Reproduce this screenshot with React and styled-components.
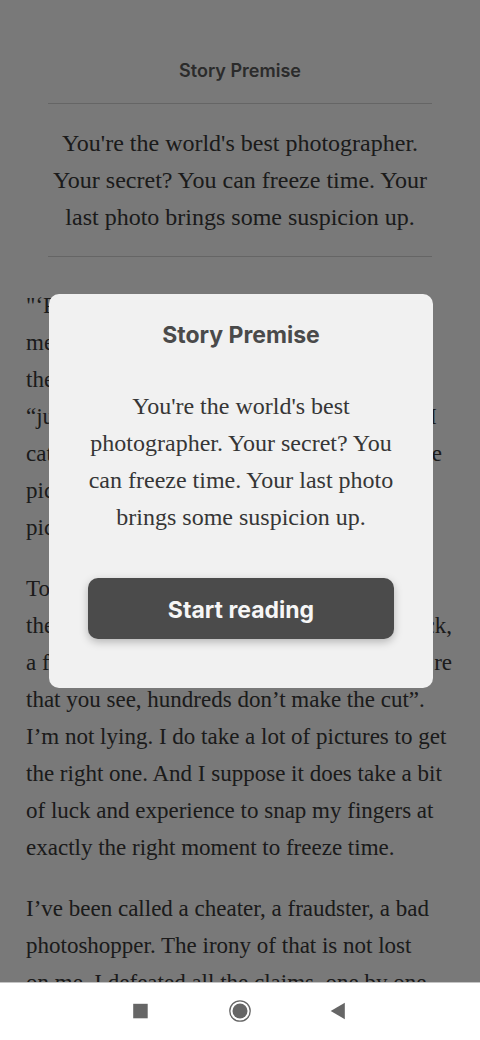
import React, { useState } from "react";
import styled, { createGlobalStyle } from "styled-components";

const GlobalStyle = createGlobalStyle`
  * {
    box-sizing: border-box;
  }

  body {
    margin: 0;
    background: #fff;
  }

  h1, h2, p {
    margin: 0;
    font-weight: inherit;
  }
`

const serif = '"Liberation Serif", Georgia, serif'
const sans = 'Inter, "Liberation Sans", sans-serif'

const Screen = styled.div`
  display: flex;
  flex-direction: column;
  height: 100vh;
  overflow: hidden;
`

const Reader = styled.main`
  position: relative;
  flex: 1;
  min-height: 0;
  overflow: hidden;
  background: #f2f2f2;
  border-bottom: 1px solid #c4c4c4;
`

const Intro = styled.header`
  margin: 0 10%;
  padding-top: 59px;
  text-align: center;
`

const IntroTitle = styled.h1`
  padding-bottom: 20px;
  color: #575757;
  font: 600 18px/24px ${sans};
`

const Premise = styled.p`
  padding: 21px 0 20px;
  border-top: 1px solid #cbcbcb;
  border-bottom: 1px solid #cbcbcb;
  color: #363636;
  font: 24px/37px ${serif};
  white-space: nowrap;
`

const Story = styled.article`
  display: flex;
  flex-direction: column;
  gap: 24px;
  padding: 30px 26px 0;
  color: #363636;
  font: 23px/37px ${serif};
`

const Line = styled.span`
  display: block;
  white-space: nowrap;
`

const SplitLine = styled(Line)`
  display: flex;
  justify-content: space-between;
  padding-right: ${(props) => props.$inset || 0}px;
`

const Overlay = styled.div`
  position: absolute;
  inset: 0;
  display: flex;
  align-items: center;
  justify-content: center;
  padding: 0 47px 0 49px;
  background: rgba(0, 0, 0, 0.5);
`

const Dialog = styled.section`
  width: 100%;
  padding: 26px 39px 49px;
  border-radius: 10px;
  background: #f1f1f1;
  text-align: center;
`

const DialogTitle = styled.h2`
  color: #4a4a4a;
  font: 700 23px/30px ${sans};
`

const DialogText = styled.p`
  padding: 38px 0 42px;
  color: #363636;
  font: 24px/37px ${serif};
`

const StartButton = styled.button`
  display: block;
  width: 100%;
  height: 61px;
  padding: 2px 0 0;
  border: 0;
  border-radius: 10px;
  background: #4b4b4b;
  box-shadow: 0 3px 8px rgba(0, 0, 0, 0.25);
  color: #f6f6f6;
  font: 700 23px/30px ${sans};
  cursor: pointer;
`

const NavBar = styled.nav`
  display: flex;
  flex: none;
  justify-content: center;
  gap: 75px;
  height: 57px;
  padding-bottom: 2px;
  background: #fff;
`

const NavButton = styled.button`
  display: flex;
  align-items: center;
  justify-content: center;
  width: 24px;
  padding: 0;
  border: 0;
  background: none;
  color: #666;
`

const premise = ["You're the world's best photographer.", "Your secret? You can freeze time. Your", "last photo brings some suspicion up."]
const dialogPremise = ["You're the world's best", "photographer. Your secret? You", "can freeze time. Your last photo", "brings some suspicion up."]

// an array holds the start and the end of a line that runs under the dialog
const story = [
  ["\"‘P", "me", "the", ["“ju", "I", 17], ["cat", "e", 12], "pic", "pic"],
  [
    "To",
    ["the", "ck,", 2],
    ["a f", "re", 2],
    "that you see, hundreds don’t make the cut”.",
    "I’m not lying. I do take a lot of pictures to get",
    "the right one. And I suppose it does take a bit",
    "of luck and experience to snap my fingers at",
    "exactly the right moment to freeze time.",
  ],
  [
    "I’ve been called a cheater, a fraudster, a bad",
    "photoshopper. The irony of that is not lost",
    "on me. I defeated all the claims, one by one",
  ],
]

const StoryLine = ({ line }) => {
  if (!Array.isArray(line)) return <Line>{line}</Line>
  const [start, end, inset] = line
  return (
    <SplitLine $inset={inset}>
      <span>{start}</span>
      <span>{end}</span>
    </SplitLine>
  )
}

const PremiseDialog = ({ onStart }) => (
  <Overlay>
    <Dialog role="dialog" aria-modal="true" aria-labelledby="premise-title">
      <DialogTitle id="premise-title">Story Premise</DialogTitle>
      <DialogText>
        {dialogPremise.map((line) => <Line key={line}>{line}</Line>)}
      </DialogText>
      <StartButton type="button" onClick={onStart}>Start reading</StartButton>
    </Dialog>
  </Overlay>
)

const SystemNav = () => (
  <NavBar>
    <NavButton type="button" aria-label="Recent apps">
      <svg width="24" height="24" viewBox="0 0 24 24" fill="currentColor">
        <rect x="4.2" y="4.8" width="14.5" height="14.5" />
      </svg>
    </NavButton>
    <NavButton type="button" aria-label="Home">
      <svg width="24" height="24" viewBox="0 0 24 24">
        <circle cx="12" cy="12" r="10.2" fill="none" stroke="currentColor" strokeWidth="1.3" />
        <circle cx="12" cy="12" r="7.5" fill="currentColor" />
      </svg>
    </NavButton>
    <NavButton type="button" aria-label="Back">
      <svg width="24" height="24" viewBox="0 0 24 24" fill="currentColor">
        <path d="M3.7 12 17.8 3.8v16.4z" />
      </svg>
    </NavButton>
  </NavBar>
)

const App = () => {
  const [open, setOpen] = useState(true)

  return (
    <>
      <GlobalStyle />
      <Screen>
        <Reader>
          <Intro>
            <IntroTitle>Story Premise</IntroTitle>
            <Premise>
              {premise.map((line) => <Line key={line}>{line}</Line>)}
            </Premise>
          </Intro>
          <Story>
            {story.map((lines, i) => (
              <p key={i}>
                {lines.map((line, j) => <StoryLine key={j} line={line} />)}
              </p>
            ))}
          </Story>
          {open && <PremiseDialog onStart={() => setOpen(false)} />}
        </Reader>
        <SystemNav />
      </Screen>
    </>
  );
};

export default App;
